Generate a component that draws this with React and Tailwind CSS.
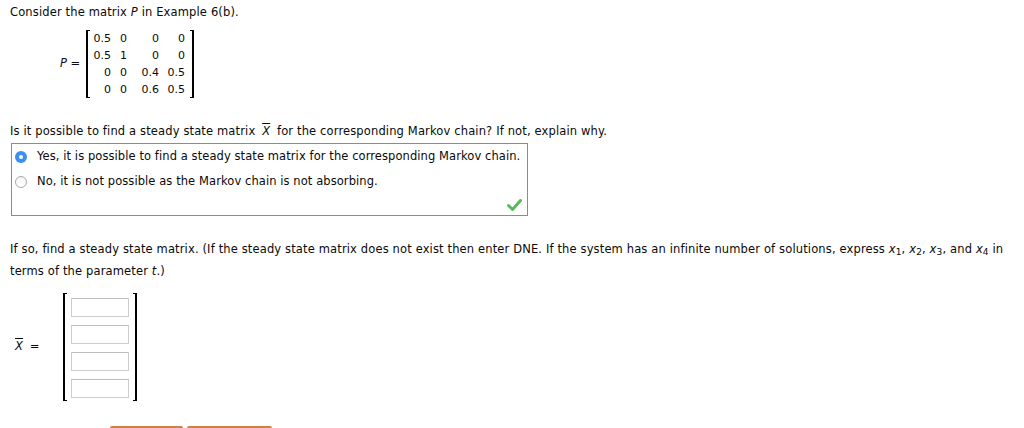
import React from 'react';

const font = { fontFamily: 'Verdana, "DejaVu Sans", sans-serif' };

const rows = [
  ['0.5', '0', '0', '0'],
  ['0.5', '1', '0', '0'],
  ['0', '0', '0.4', '0.5'],
  ['0', '0', '0.6', '0.5'],
];

function Bracket({ side }) {
  return (
    <div
      className={`w-[4px] self-stretch border-y border-black ${side === 'left' ? 'border-l-2' : 'border-r-2'}`}
    />
  );
}

function Xbar() {
  return <span className="italic overline decoration-1">X</span>;
}

function Radio({ checked }) {
  if (checked) {
    return (
      <span className="w-[12px] h-[12px] shrink-0 rounded-full bg-[#3a8ff2] flex items-center justify-center">
        <span className="w-[4px] h-[4px] rounded-full bg-white" />
      </span>
    );
  }
  return <span className="w-[12px] h-[12px] shrink-0 rounded-full border border-[#a9a9a9] bg-gradient-to-b from-[#f4f4f4] to-white" />;
}

function Sub({ n }) {
  return (
    <span>
      <span className="italic">x</span>
      <sub className="text-[9px]">{n}</sub>
    </span>
  );
}

export default function App() {
  return (
    <div className="w-[1024px] h-[428px] overflow-hidden bg-white text-[11.5px] tracking-[0.14px] text-[#0a0a0a]" style={font}>
      <div className="pl-[10px] pt-[5px]">
        <p className="leading-[14px]">
          Consider the matrix <span className="italic">P</span> in Example 6(b).
        </p>

        {/* matrix P */}
        <div className="flex items-center mt-[11px] ml-[50px] tracking-normal">
          <span className="w-[26px]">
            <span className="italic">P</span> =
          </span>
          <div className="flex">
            <Bracket side="left" />
            <div className="grid grid-cols-[21px_16px_32px_26px] pr-[5px] leading-[17px] text-[11px]">
              {rows.flat().map((v, i) => (
                <span key={i} className="text-right">{v}</span>
              ))}
            </div>
            <Bracket side="right" />
          </div>
        </div>

        <p className="leading-[14px] mt-[26px]">
          Is it possible to find a steady state matrix <span className="mx-[3px]"><Xbar /></span> for the corresponding Markov chain? If not, explain why.
        </p>

        {/* answer box */}
        <div className="w-[517px] h-[73px] mt-[5px] ml-[1px] p-px bg-[#5cb343]">
          <div className="h-full bg-white flex flex-col whitespace-nowrap tracking-[0.08px]">
            <div className="h-[25px] flex items-center pl-[3px] gap-[10px]">
              <Radio checked />
              <span>Yes, it is possible to find a steady state matrix for the corresponding Markov chain.</span>
            </div>
            <div className="h-[25px] flex items-center pl-[3px] gap-[10px]">
              <Radio />
              <span>No, it is not possible as the Markov chain is not absorbing.</span>
            </div>
            <div className="flex-1 flex justify-end items-center pr-[5px] pt-[1px]">
              <svg width="15" height="12" viewBox="0 0 15 12">
                <path d="M1.5 6.5 L5.5 10.5 L13.5 1.5" fill="none" stroke="#5cb85c" strokeWidth="3" strokeLinecap="round" strokeLinejoin="round" />
              </svg>
            </div>
          </div>
        </div>

        <p className="leading-[22px] mt-[22px] whitespace-nowrap">
          If so, find a steady state matrix. (If the steady state matrix does not exist then enter DNE. If the system has an infinite number of solutions, express <Sub n="1" />, <Sub n="2" />, <Sub n="3" />, and <Sub n="4" /> in
          <br />
          terms of the parameter <span className="italic">t</span>.)
        </p>

        {/* X bar entry */}
        <div className="flex items-center mt-[11px] ml-[5px]">
          <span className="w-[48px]">
            <Xbar /> <span className="ml-[3px]">=</span>
          </span>
          <div className="flex">
            <Bracket side="left" />
            <div className="flex flex-col gap-[8px] pt-[5px] pb-[3px] pl-[4px] pr-[4px]">
              {[0, 1, 2, 3].map((i) => (
                <input
                  key={i}
                  className="w-[58px] h-[19px] border border-[#cdcdcd] border-t-[#bdbdbd] bg-white outline-none"
                />
              ))}
            </div>
            <Bracket side="right" />
          </div>
        </div>

        {/* buttons */}
        <div className="flex gap-[4px] ml-[100px] mt-[25px]">
          <div className="w-[73px] h-[24px] rounded-t-[2px] bg-[#c8834c] pt-[2px] px-px">
            <div className="h-full bg-white" />
          </div>
          <div className="w-[85px] h-[24px] rounded-t-[2px] bg-[#c8834c] pt-[2px] px-px">
            <div className="h-full bg-white" />
          </div>
        </div>
      </div>
    </div>
  );
}
